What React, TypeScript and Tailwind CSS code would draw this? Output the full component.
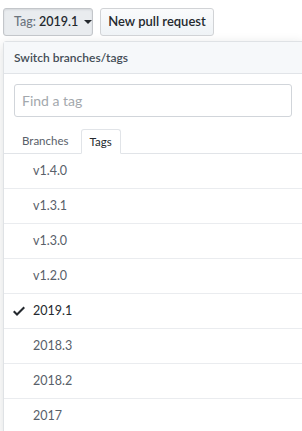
import { useState } from 'react';

const tags = ['v1.4.0', 'v1.3.1', 'v1.3.0', 'v1.2.0', '2019.1', '2018.3', '2018.2', '2017'];

const CheckIcon = () => (
  <svg width="12" height="16" viewBox="0 0 12 16" className="fill-[#24292e]">
    <path fillRule="evenodd" d="M12 5l-8 8-4-4 1.5-1.5L4 10l6.5-6.5L12 5z" />
  </svg>
);

const TagRow = ({ name, selected }: { name: string; selected: boolean }) => (
  <div className="flex h-[35px] items-center border-b border-[#eaecef] bg-white">
    <div className="flex w-[29px] justify-center pl-[1px]">{selected && <CheckIcon />}</div>
    <span className={selected ? 'text-[12.5px] text-[#24292e]' : 'text-[12.5px] text-[#586069]'}>{name}</span>
  </div>
);

export default function App() {
  const [query, setQuery] = useState('');
  const selectedTag = '2019.1';

  return (
    <div
      className="relative h-[431px] w-[302px] overflow-hidden bg-white"
      style={{ fontFamily: 'Lato, "Open Sans", sans-serif' }}
    >
      <div className="flex gap-[7px] pl-[3px] pt-[8px]">
        <button className="flex h-[28px] w-[90px] items-center gap-[3px] rounded-[3px] border border-[#c3c6ca] bg-[#e9ecef] pl-[10px] text-[12.5px] shadow-[inset_0_1px_2px_rgba(27,31,35,0.1)]">
          <span className="font-medium text-[#6a737d]">Tag:</span>
          <span className="font-semibold text-[#24292e]">2019.1</span>
          <span className="ml-[3px] h-0 w-0 border-x-[4px] border-t-[4px] border-x-transparent border-t-[#24292e]" />
        </button>
        <button className="flex h-[28px] w-[114px] items-center justify-center rounded-[3px] border border-[#d1d3d6] bg-gradient-to-b from-[#fafbfc] to-[#eff3f6] text-[13px] font-semibold text-[#24292e]">
          New pull request
        </button>
      </div>

      <div className="ml-[3px] mt-[5px] w-[300px] rounded-tl-[3px] border border-[#dfe2e5] shadow-[0_3px_12px_rgba(27,31,35,0.15)]">
        <div className="flex h-[32px] items-center border-b border-[#e1e4e8] bg-[#f6f8fa] pl-[10px] text-[12px] font-semibold text-[#444d56]">
          Switch branches/tags
        </div>
        <div className="bg-white px-[10px] pt-[10px]">
          <input
            value={query}
            onChange={(e) => setQuery(e.target.value)}
            placeholder="Find a tag"
            className="h-[33px] w-full rounded-[3px] border border-[#d1d5da] px-[7px] text-[14px] text-[#24292e] outline-none placeholder:text-[#a3a8ad]"
          />
        </div>
        <div className="flex gap-[4px] border-b border-[#e1e4e8] bg-white pl-[10px] pt-[12px]">
          <div className="flex h-[24px] items-center px-[8px] text-[11.5px] text-[#586069]">Branches</div>
          <div className="-mb-px flex h-[25px] items-center rounded-t-[3px] border border-b-white border-[#e1e4e8] bg-white px-[8px] text-[11.5px] text-[#24292e]">
            Tags
          </div>
        </div>
        <div>
          {tags.map((t) => (
            <TagRow key={t} name={t} selected={t === selectedTag} />
          ))}
        </div>
      </div>
    </div>
  );
}
